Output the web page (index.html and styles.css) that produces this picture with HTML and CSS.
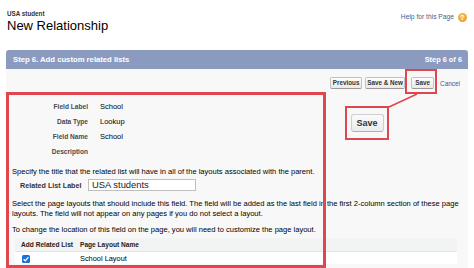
FILE: index.html
```
<!DOCTYPE html>
<html>
<head>
<meta charset="utf-8">
<link rel="stylesheet" href="styles.css">
</head>
<body>
<div class="page">
  <header class="top">
    <div class="titles">
      <div class="sub">USA student</div>
      <h1 class="title">New Relationship</h1>
    </div>
    <a class="help">Help for this Page <span class="help-icon">?</span></a>
  </header>

  <section class="block">
    <div class="bar">
      <span class="bar-title">Step 6. Add custom related lists</span>
      <span class="bar-step">Step 6 of 6</span>
    </div>
    <div class="body">
      <div class="btnrow">
        <button class="btn btn-prev">Previous</button>
        <button class="btn btn-savenew">Save &amp; New</button>
        <button class="btn btn-save">Save</button>
        <a class="cancel">Cancel</a>
      </div>

      <div class="content">
        <div class="fields">
          <div class="lbl">Field Label</div><div class="val">School</div>
          <div class="lbl">Data Type</div><div class="val">Lookup</div>
          <div class="lbl">Field Name</div><div class="val">School</div>
          <div class="lbl">Description</div><div class="val"></div>
        </div>

        <p class="txt specify">Specify the title that the related list will have in all of the layouts associated with the parent.</p>

        <div class="related">
          <label class="rel-lbl">Related List Label</label>
          <div class="input">USA students</div>
        </div>

        <p class="txt select">Select the page layouts that should include this field. The field will be added as the last field in the first 2-column section of these page layouts. The field will not appear on any pages if you do not select a layout.</p>

        <p class="txt change">To change the location of this field on the page, you will need to customize the page layout.</p>

        <div class="table">
          <div class="thead">
            <div class="c1">Add Related List</div>
            <div class="c2">Page Layout Name</div>
          </div>
          <div class="trow">
            <div class="c1"><span class="check"><svg viewBox="0 0 8 8" width="8" height="8"><path d="M1.6 4.2 L3.3 5.8 L6.4 2.2" fill="none" stroke="#fff" stroke-width="1.3"/></svg></span></div>
            <div class="c2">School Layout</div>
          </div>
        </div>
      </div>
    </div>

    <div class="hl hl-main"></div>
    <div class="hl hl-save"></div>
    <div class="hl hl-callout"><span class="big-save">Save</span></div>
    <svg class="connector" width="32" height="16" viewBox="0 0 32 16"><line x1="1" y1="14" x2="29" y2="1" stroke="#e0464e" stroke-width="1.5"/></svg>
  </section>
</div>
</body>
</html>
```

FILE: styles.css
```
* { box-sizing: border-box; }
html, body { margin: 0; padding: 0; }
body {
  background: #fff;
  font-family: "Liberation Sans", Arial, sans-serif;
  color: #111;
  width: 474px;
  height: 268px;
  overflow: hidden;
}
.top {
  display: flex;
  justify-content: space-between;
  align-items: flex-start;
  padding: 10px 7px 0 7px;
  height: 50px;
}
.sub {
  font-size: 6.3px;
  font-weight: bold;
  line-height: 8px;
  color: #333;
}
.title {
  margin: 0;
  font-size: 13px;
  font-weight: normal;
  line-height: 15px;
  color: #000;
}
.help {
  display: flex;
  align-items: center;
  gap: 4px;
  font-size: 6.7px;
  color: #3b5f8f;
  margin-top: 2px;
  line-height: 10px;
}
.help-icon {
  display: inline-flex;
  align-items: center;
  justify-content: center;
  width: 9px;
  height: 9px;
  border-radius: 50%;
  background: radial-gradient(circle at 40% 35%, #f7c35c, #e8921c);
  color: #fff;
  font-weight: bold;
  font-size: 7px;
  line-height: 9px;
}
.block {
  position: relative;
  margin: 0 6px;
  height: 218px;
}
.bar {
  display: flex;
  justify-content: space-between;
  align-items: center;
  height: 19px;
  padding: 0 6px 0 7px;
  background: #8a9bbf;
  border-radius: 3px 3px 0 0;
  color: #fff;
  font-weight: bold;
  font-size: 7.7px;
}
.bar-step { font-size: 7.4px; }
.body {
  background: #f8f8f8;
  height: 199px;
  padding: 0 6px;
}
.btnrow {
  display: flex;
  justify-content: flex-end;
  align-items: center;
  padding-top: 8px;
  padding-right: 2px;
  height: 20px;
}
.btn {
  font-family: "Liberation Sans", Arial, sans-serif;
  height: 12px;
  padding: 0;
  font-size: 6.3px;
  font-weight: bold;
  color: #333;
  white-space: nowrap;
  background: linear-gradient(#fdfdfd, #e9e9e9);
  border: 1px solid #c2c2c2;
  border-bottom-color: #9a9a9a;
  border-radius: 2px;
  line-height: 10px;
}
.btn-prev { width: 32px; }
.btn-savenew { width: 40px; margin-left: 3px; }
.btn-save { width: 23px; margin-left: 6px; }
.cancel {
  margin-left: 6px;
  font-size: 6.4px;
  color: #1a62b0;
}
.content {
  padding-top: 10px;
}
.fields {
  display: grid;
  grid-template-columns: 76px 1fr;
  column-gap: 12px;
  grid-auto-rows: 15px;
  align-items: center;
}
.lbl {
  text-align: right;
  font-weight: bold;
  font-size: 6.6px;
  color: #4a4a4a;
}
.val {
  font-size: 7.5px;
  color: #000;
}
.txt {
  margin: 0;
  font-size: 7.55px;
  line-height: 10px;
  color: #000;
}
.specify { margin-top: 8px; }
.related {
  display: flex;
  align-items: center;
  margin-top: 2px;
  padding-left: 8px;
  height: 12px;
}
.rel-lbl {
  font-weight: bold;
  font-size: 7.2px;
  color: #333;
  width: 68px;
}
.input {
  width: 108px;
  height: 12px;
  background: #fff;
  border: 1px solid #bfbfbf;
  font-size: 9.4px;
  line-height: 10px;
  padding-left: 3px;
  color: #222;
}
.select { margin-top: 8px; }
.change { margin-top: 6px; }
.table {
  margin: 3px 5px 0 3px;
  background: #fff;
}
.thead, .trow {
  display: flex;
  align-items: center;
}
.thead {
  height: 14px;
  background: #f2f3f3;
  font-weight: bold;
  font-size: 6.6px;
  color: #222;
  border-bottom: 1px solid #e4e4e4;
}
.trow {
  height: 12px;
  font-size: 7.4px;
  color: #000;
}
.c1 { width: 65px; padding-left: 6px; }
.c2 { flex: 1; }
.check {
  display: inline-flex;
  width: 8px;
  height: 8px;
  margin-left: 1px;
  background: #1f6fd6;
  border-radius: 1.5px;
  vertical-align: middle;
}
.hl {
  position: absolute;
  border: 2px solid #e0464e;
}
.hl-main {
  left: 0;
  top: 42px;
  width: 320px;
  height: 176px;
  border-width: 3px;
}
.hl-save {
  left: 399px;
  top: 19px;
  width: 32px;
  height: 25px;
}
.hl-callout {
  left: 339px;
  top: 56px;
  width: 44px;
  height: 34px;
  display: flex;
  align-items: center;
  justify-content: center;
}
.big-save {
  display: inline-flex;
  align-items: center;
  justify-content: center;
  width: 33px;
  height: 18px;
  font-size: 9px;
  font-weight: bold;
  color: #333;
  background: linear-gradient(#fbfbfb, #ececec);
  border: 1px solid #cfcfcf;
  border-bottom-color: #b0b0b0;
  border-radius: 3px;
}
.connector {
  position: absolute;
  left: 382px;
  top: 43px;
}
```
